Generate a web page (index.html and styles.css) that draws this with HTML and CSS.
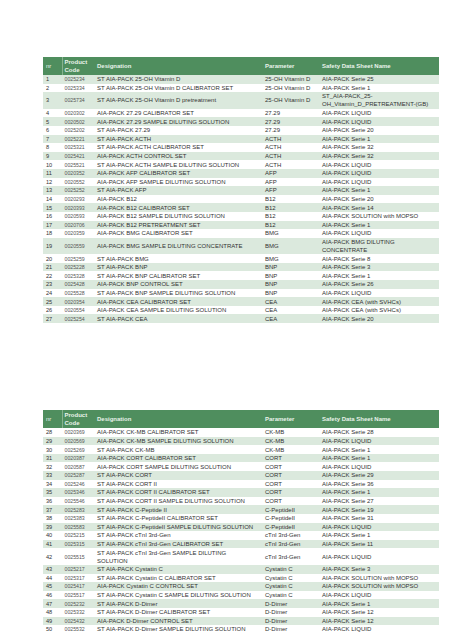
FILE: index.html
```html
<!DOCTYPE html>
<html>
<head>
<meta charset="utf-8">
<link rel="stylesheet" href="styles.css">
</head>
<body>
<div class="page">
<table class="sheet odd-shaded">
<colgroup><col class="c-nr"><col class="c-code"><col class="c-des"><col class="c-par"><col class="c-sds"></colgroup>
<thead><tr><th class="nr">nr</th><th class="code">Product<br>Code</th><th>Designation</th><th>Parameter</th><th>Safety Data Sheet Name</th></tr></thead>
<tbody>
<tr><td class="nr">1</td><td class="code">0025234</td><td>ST AIA-PACK 25-OH Vitamin D</td><td>25-OH Vitamin D</td><td>AIA-PACK Serie 25</td></tr>
<tr><td class="nr">2</td><td class="code">0025334</td><td>ST AIA-PACK 25-OH Vitamin D CALIBRATOR SET</td><td>25-OH Vitamin D</td><td>AIA-PACK Serie 1</td></tr>
<tr><td class="nr">3</td><td class="code">0025734</td><td>ST AIA-PACK 25-OH Vitamin D pretreatment</td><td>25-OH Vitamin D</td><td>ST_AIA-PACK_25-<br>OH_Vitamin_D_PRETREATMENT-(GB)</td></tr>
<tr><td class="nr">4</td><td class="code">0020302</td><td>AIA-PACK 27.29 CALIBRATOR SET</td><td>27.29</td><td>AIA-PACK LIQUID</td></tr>
<tr><td class="nr">5</td><td class="code">0020502</td><td>AIA-PACK 27.29 SAMPLE DILUTING SOLUTION</td><td>27.29</td><td>AIA-PACK LIQUID</td></tr>
<tr><td class="nr">6</td><td class="code">0025202</td><td>ST AIA-PACK 27.29</td><td>27.29</td><td>AIA-PACK Serie 20</td></tr>
<tr><td class="nr">7</td><td class="code">0025221</td><td>ST AIA-PACK ACTH</td><td>ACTH</td><td>AIA-PACK Serie 1</td></tr>
<tr><td class="nr">8</td><td class="code">0025321</td><td>ST AIA-PACK ACTH CALIBRATOR SET</td><td>ACTH</td><td>AIA-PACK Serie 32</td></tr>
<tr><td class="nr">9</td><td class="code">0025421</td><td>AIA-PACK ACTH CONTROL SET</td><td>ACTH</td><td>AIA-PACK Serie 32</td></tr>
<tr><td class="nr">10</td><td class="code">0025521</td><td>ST AIA-PACK ACTH SAMPLE DILUTING SOLUTION</td><td>ACTH</td><td>AIA-PACK LIQUID</td></tr>
<tr><td class="nr">11</td><td class="code">0020352</td><td>AIA-PACK AFP CALIBRATOR SET</td><td>AFP</td><td>AIA-PACK LIQUID</td></tr>
<tr><td class="nr">12</td><td class="code">0020552</td><td>AIA-PACK AFP SAMPLE DILUTING SOLUTION</td><td>AFP</td><td>AIA-PACK LIQUID</td></tr>
<tr><td class="nr">13</td><td class="code">0025252</td><td>ST AIA-PACK AFP</td><td>AFP</td><td>AIA-PACK Serie 1</td></tr>
<tr><td class="nr">14</td><td class="code">0020293</td><td>AIA-PACK B12</td><td>B12</td><td>AIA-PACK Serie 20</td></tr>
<tr><td class="nr">15</td><td class="code">0020393</td><td>AIA-PACK B12 CALIBRATOR SET</td><td>B12</td><td>AIA-PACK Serie 14</td></tr>
<tr><td class="nr">16</td><td class="code">0020593</td><td>AIA-PACK B12 SAMPLE DILUTING SOLUTION</td><td>B12</td><td>AIA-PACK SOLUTION with MOPSO</td></tr>
<tr><td class="nr">17</td><td class="code">0020706</td><td>AIA-PACK B12 PRETREATMENT SET</td><td>B12</td><td>AIA-PACK Serie 1</td></tr>
<tr><td class="nr">18</td><td class="code">0020359</td><td>AIA-PACK BMG CALIBRATOR SET</td><td>BMG</td><td>AIA-PACK LIQUID</td></tr>
<tr><td class="nr">19</td><td class="code">0020559</td><td>AIA-PACK BMG SAMPLE DILUTING CONCENTRATE</td><td>BMG</td><td>AIA-PACK BMG DILUTING<br>CONCENTRATE</td></tr>
<tr><td class="nr">20</td><td class="code">0025259</td><td>ST AIA-PACK BMG</td><td>BMG</td><td>AIA-PACK Serie 8</td></tr>
<tr><td class="nr">21</td><td class="code">0025228</td><td>ST AIA-PACK BNP</td><td>BNP</td><td>AIA-PACK Serie 3</td></tr>
<tr><td class="nr">22</td><td class="code">0025328</td><td>ST AIA-PACK BNP CALIBRATOR SET</td><td>BNP</td><td>AIA-PACK Serie 1</td></tr>
<tr><td class="nr">23</td><td class="code">0025428</td><td>AIA-PACK BNP CONTROL SET</td><td>BNP</td><td>AIA-PACK Serie 26</td></tr>
<tr><td class="nr">24</td><td class="code">0025528</td><td>ST AIA-PACK BNP SAMPLE DILUTING SOLUTION</td><td>BNP</td><td>AIA-PACK LIQUID</td></tr>
<tr><td class="nr">25</td><td class="code">0020354</td><td>AIA-PACK CEA CALIBRATOR SET</td><td>CEA</td><td>AIA-PACK CEA (with SVHCs)</td></tr>
<tr><td class="nr">26</td><td class="code">0020554</td><td>AIA-PACK CEA SAMPLE DILUTING SOLUTION</td><td>CEA</td><td>AIA-PACK CEA (with SVHCs)</td></tr>
<tr><td class="nr">27</td><td class="code">0025254</td><td>ST AIA-PACK CEA</td><td>CEA</td><td>AIA-PACK Serie 20</td></tr>
</tbody>
</table>

<table class="sheet even-shaded second">
<colgroup><col class="c-nr"><col class="c-code"><col class="c-des"><col class="c-par"><col class="c-sds"></colgroup>
<thead><tr><th class="nr">nr</th><th class="code">Product<br>Code</th><th>Designation</th><th>Parameter</th><th>Safety Data Sheet Name</th></tr></thead>
<tbody>
<tr><td class="nr">28</td><td class="code">0020369</td><td>AIA-PACK CK-MB CALIBRATOR SET</td><td>CK-MB</td><td>AIA-PACK Serie 28</td></tr>
<tr><td class="nr">29</td><td class="code">0020569</td><td>AIA-PACK CK-MB SAMPLE DILUTING SOLUTION</td><td>CK-MB</td><td>AIA-PACK LIQUID</td></tr>
<tr><td class="nr">30</td><td class="code">0025269</td><td>ST AIA-PACK CK-MB</td><td>CK-MB</td><td>AIA-PACK Serie 1</td></tr>
<tr><td class="nr">31</td><td class="code">0020387</td><td>AIA-PACK CORT CALIBRATOR SET</td><td>CORT</td><td>AIA-PACK Serie 1</td></tr>
<tr><td class="nr">32</td><td class="code">0020587</td><td>AIA-PACK CORT SAMPLE DILUTING SOLUTION</td><td>CORT</td><td>AIA-PACK LIQUID</td></tr>
<tr><td class="nr">33</td><td class="code">0025287</td><td>ST AIA-PACK CORT</td><td>CORT</td><td>AIA-PACK Serie 29</td></tr>
<tr><td class="nr">34</td><td class="code">0025246</td><td>ST AIA-PACK CORT II</td><td>CORT</td><td>AIA-PACK Serie 36</td></tr>
<tr><td class="nr">35</td><td class="code">0025346</td><td>ST AIA-PACK CORT II CALIBRATOR SET</td><td>CORT</td><td>AIA-PACK Serie 1</td></tr>
<tr><td class="nr">36</td><td class="code">0025546</td><td>ST AIA-PACK CORT II SAMPLE DILUTING SOLUTION</td><td>CORT</td><td>AIA-PACK Serie 27</td></tr>
<tr><td class="nr">37</td><td class="code">0025283</td><td>ST AIA-PACK C-Peptide II</td><td>C-PeptideII</td><td>AIA-PACK Serie 19</td></tr>
<tr><td class="nr">38</td><td class="code">0025383</td><td>ST AIA-PACK C-PeptideII CALIBRATOR SET</td><td>C-PeptideII</td><td>AIA-PACK Serie 31</td></tr>
<tr><td class="nr">39</td><td class="code">0025583</td><td>ST AIA-PACK C-PeptideII SAMPLE DILUTING SOLUTION</td><td>C-PeptideII</td><td>AIA-PACK LIQUID</td></tr>
<tr><td class="nr">40</td><td class="code">0025215</td><td>ST AIA-PACK cTnI 3rd-Gen</td><td>cTnI 3rd-Gen</td><td>AIA-PACK Serie 1</td></tr>
<tr><td class="nr">41</td><td class="code">0025315</td><td>ST AIA-PACK cTnI 3rd-Gen CALIBRATOR SET</td><td>cTnI 3rd-Gen</td><td>AIA-PACK Serie 11</td></tr>
<tr><td class="nr">42</td><td class="code">0025515</td><td>ST AIA-PACK cTnI 3rd-Gen SAMPLE DILUTING<br>SOLUTION</td><td>cTnI 3rd-Gen</td><td>AIA-PACK LIQUID</td></tr>
<tr><td class="nr">43</td><td class="code">0025217</td><td>ST AIA-PACK Cystatin C</td><td>Cystatin C</td><td>AIA-PACK Serie 3</td></tr>
<tr><td class="nr">44</td><td class="code">0025317</td><td>ST AIA-PACK Cystatin C CALIBRATOR SET</td><td>Cystatin C</td><td>AIA-PACK SOLUTION with MOPSO</td></tr>
<tr><td class="nr">45</td><td class="code">0025417</td><td>AIA-PACK Cystatin C CONTROL SET</td><td>Cystatin C</td><td>AIA-PACK SOLUTION with MOPSO</td></tr>
<tr><td class="nr">46</td><td class="code">0025517</td><td>ST AIA-PACK Cystatin C SAMPLE DILUTING SOLUTION</td><td>Cystatin C</td><td>AIA-PACK LIQUID</td></tr>
<tr><td class="nr">47</td><td class="code">0025232</td><td>ST AIA-PACK D-Dimer</td><td>D-Dimer</td><td>AIA-PACK Serie 1</td></tr>
<tr><td class="nr">48</td><td class="code">0025332</td><td>ST AIA-PACK D-Dimer CALIBRATOR SET</td><td>D-Dimer</td><td>AIA-PACK Serie 12</td></tr>
<tr><td class="nr">49</td><td class="code">0025432</td><td>AIA-PACK D-Dimer CONTROL SET</td><td>D-Dimer</td><td>AIA-PACK Serie 12</td></tr>
<tr><td class="nr">50</td><td class="code">0025532</td><td>ST AIA-PACK D-Dimer SAMPLE DILUTING SOLUTION</td><td>D-Dimer</td><td>AIA-PACK LIQUID</td></tr>
</tbody>
</table>
</div>
</body>
</html>
```
FILE: styles.css
```css
html, body {
  margin: 0;
  padding: 0;
  background: #ffffff;
}
.page {
  padding: 57px 0 0 43px;
  font-family: "Liberation Sans", Arial, sans-serif;
}
.sheet {
  width: 396px;
  border-collapse: collapse;
  table-layout: fixed;
  color: #333333;
}
.sheet.second {
  margin-top: 87px;
}
.c-nr { width: 19px; }
.c-code { width: 33px; }
.c-des { width: 168px; }
.c-par { width: 57px; }
.c-sds { width: 119px; }

.sheet th {
  background: #4f8e5e;
  color: #e9f3ea;
  font-weight: bold;
  font-size: 6px;
  line-height: 8px;
  text-align: left;
  vertical-align: middle;
  padding: 1px 2px 1px 2px;
  height: 16px;
}
.sheet th.nr {
  padding-left: 3px;
  font-weight: normal;
  border-right: 1px solid #86b28f;
}
.sheet th.code {
  padding-left: 2px;
}
.sheet td {
  font-size: 6px;
  line-height: 8px;
  padding: 0.3px 2px 0.3px 2px;
  white-space: nowrap;
  overflow: visible;
  vertical-align: middle;
}
.sheet td.nr {
  padding-left: 3px;
  font-size: 5.6px;
}
.sheet td.code {
  font-size: 5.2px;
  color: #555555;
  padding-left: 2.5px;
}
.odd-shaded tbody tr:nth-child(odd) td,
.even-shaded tbody tr:nth-child(even) td {
  background: #dbe9dd;
}
```
